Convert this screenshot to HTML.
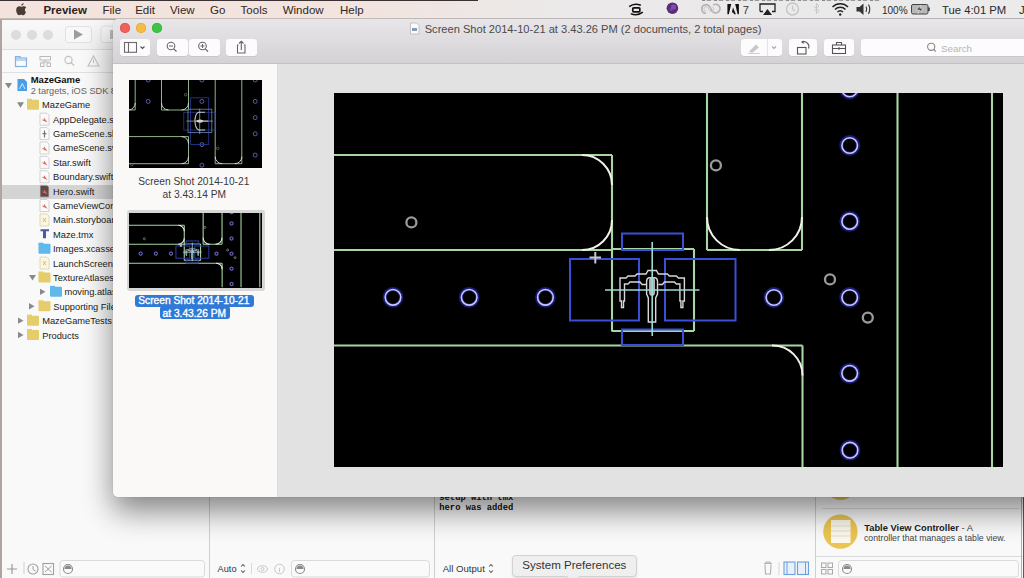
<!DOCTYPE html>
<html><head><meta charset="utf-8"><style>
*{margin:0;padding:0;box-sizing:border-box}
html,body{width:1024px;height:578px;overflow:hidden;background:#f5f5f5;font-family:'Liberation Sans', sans-serif}
.t{position:absolute;white-space:nowrap}
</style></head>
<body>
<div style="position:absolute;left:0.00px;top:0.00px;width:1024.00px;height:578.00px;background:#f9f9f9"></div>
<div style="position:absolute;left:0.00px;top:19.00px;width:1.60px;height:559.00px;background:#b0a4a0"></div>
<div style="position:absolute;left:0.00px;top:19.00px;width:1024.00px;height:1.00px;background:#b8aca8"></div>
<div style="position:absolute;left:1.60px;top:19.80px;width:1022.40px;height:29.20px;background:linear-gradient(#f8f8f8,#f2f2f2);border-radius:3px 0 0 0"></div>
<div style="position:absolute;left:2.00px;top:49.00px;width:1022.00px;height:1.00px;background:#dedede"></div>
<div style="position:absolute;left:11.3px;top:29.7px;width:10px;height:10px;border-radius:50%;background:#dcdcdc"></div>
<div style="position:absolute;left:27.3px;top:29.7px;width:10px;height:10px;border-radius:50%;background:#dcdcdc"></div>
<div style="position:absolute;left:43.3px;top:29.7px;width:10px;height:10px;border-radius:50%;background:#dcdcdc"></div>
<div style="position:absolute;left:65.00px;top:26.00px;width:27.00px;height:16.50px;border:1px solid #e2e2e2;border-radius:3px;background:#f8f8f8"></div>
<svg style="position:absolute;left:0;top:0px" width="120" height="80"><path d="M74,29.5 L83,34.5 L74,39.5 Z" fill="#9c9c9c"/><rect x="101" y="26" width="14" height="16.5" rx="3" fill="#f8f8f8" stroke="#e2e2e2"/><rect x="110" y="30" width="3" height="9" fill="#bdbdbd"/></svg>
<svg style="position:absolute;left:0;top:52px" width="113" height="20">
<rect x="15.5" y="6" width="11" height="8.5" fill="none" stroke="#86b2e2" stroke-width="1.2"/><path d="M15.5,6 L15.5,4.5 L20,4.5 L21,6" fill="none" stroke="#86b2e2" stroke-width="1.2"/><line x1="15.5" y1="8" x2="26.5" y2="8" stroke="#86b2e2" stroke-width="1"/>
<rect x="40" y="4.5" width="10.5" height="3.5" fill="none" stroke="#bcbcbc" stroke-width="1"/><rect x="40.5" y="11" width="3.5" height="3.5" fill="none" stroke="#bcbcbc"/><rect x="47" y="11" width="3.5" height="3.5" fill="none" stroke="#bcbcbc"/><path d="M45,8 V10 M42,11 V10 H49 V11" fill="none" stroke="#bcbcbc"/>
<circle cx="68.5" cy="8" r="3.6" fill="none" stroke="#c0c0c0" stroke-width="1.1"/><line x1="71" y1="10.5" x2="74" y2="13.5" stroke="#c0c0c0" stroke-width="1.2"/>
<path d="M93.5,4 L99,14 L88,14 Z" fill="none" stroke="#c4c4c4" stroke-width="1.1"/><line x1="93.5" y1="7.5" x2="93.5" y2="11" stroke="#c4c4c4"/>
</svg>
<div style="position:absolute;left:2.00px;top:72.00px;width:207.00px;height:1.00px;background:#e0e0e0"></div>
<div style="position:absolute;left:2.00px;top:184.50px;width:207.00px;height:14.00px;background:#d4d4d4"></div>
<div class="t" style="left:30.70px;top:74.70px;font-size:9.5px;line-height:9.5px;color:#111;font-weight:bold;font-family:'Liberation Sans', sans-serif;">MazeGame</div>
<div class="t" style="left:30.70px;top:86.50px;font-size:9.2px;line-height:9.2px;color:#666;font-weight:normal;font-family:'Liberation Sans', sans-serif;">2 targets, iOS SDK 8.1</div>
<div class="t" style="left:42.10px;top:101.30px;font-size:9.3px;line-height:9.3px;color:#222;font-weight:normal;font-family:'Liberation Sans', sans-serif;">MazeGame</div>
<div class="t" style="left:53.00px;top:115.69px;font-size:9.3px;line-height:9.3px;color:#222;font-weight:normal;font-family:'Liberation Sans', sans-serif;">AppDelegate.swift</div>
<div class="t" style="left:53.00px;top:130.08px;font-size:9.3px;line-height:9.3px;color:#222;font-weight:normal;font-family:'Liberation Sans', sans-serif;">GameScene.sks</div>
<div class="t" style="left:53.00px;top:144.47px;font-size:9.3px;line-height:9.3px;color:#222;font-weight:normal;font-family:'Liberation Sans', sans-serif;">GameScene.swift</div>
<div class="t" style="left:53.00px;top:158.86px;font-size:9.3px;line-height:9.3px;color:#222;font-weight:normal;font-family:'Liberation Sans', sans-serif;">Star.swift</div>
<div class="t" style="left:53.00px;top:173.25px;font-size:9.3px;line-height:9.3px;color:#222;font-weight:normal;font-family:'Liberation Sans', sans-serif;">Boundary.swift</div>
<div class="t" style="left:53.00px;top:187.64px;font-size:9.3px;line-height:9.3px;color:#222;font-weight:normal;font-family:'Liberation Sans', sans-serif;">Hero.swift</div>
<div class="t" style="left:53.00px;top:202.03px;font-size:9.3px;line-height:9.3px;color:#222;font-weight:normal;font-family:'Liberation Sans', sans-serif;">GameViewController.swift</div>
<div class="t" style="left:53.00px;top:216.42px;font-size:9.3px;line-height:9.3px;color:#222;font-weight:normal;font-family:'Liberation Sans', sans-serif;">Main.storyboard</div>
<div class="t" style="left:53.00px;top:230.81px;font-size:9.3px;line-height:9.3px;color:#222;font-weight:normal;font-family:'Liberation Sans', sans-serif;">Maze.tmx</div>
<div class="t" style="left:53.00px;top:245.20px;font-size:9.3px;line-height:9.3px;color:#222;font-weight:normal;font-family:'Liberation Sans', sans-serif;">Images.xcassets</div>
<div class="t" style="left:53.00px;top:259.59px;font-size:9.3px;line-height:9.3px;color:#222;font-weight:normal;font-family:'Liberation Sans', sans-serif;">LaunchScreen.xib</div>
<div class="t" style="left:53.00px;top:273.98px;font-size:9.3px;line-height:9.3px;color:#222;font-weight:normal;font-family:'Liberation Sans', sans-serif;">TextureAtlases</div>
<div class="t" style="left:64.40px;top:288.37px;font-size:9.3px;line-height:9.3px;color:#222;font-weight:normal;font-family:'Liberation Sans', sans-serif;">moving.atlas</div>
<div class="t" style="left:53.30px;top:302.76px;font-size:9.3px;line-height:9.3px;color:#222;font-weight:normal;font-family:'Liberation Sans', sans-serif;">Supporting Files</div>
<div class="t" style="left:42.20px;top:317.15px;font-size:9.3px;line-height:9.3px;color:#222;font-weight:normal;font-family:'Liberation Sans', sans-serif;">MazeGameTests</div>
<div class="t" style="left:42.20px;top:331.54px;font-size:9.3px;line-height:9.3px;color:#222;font-weight:normal;font-family:'Liberation Sans', sans-serif;">Products</div>
<svg style="position:absolute;left:0;top:0px" width="113" height="350">
<path d="M5,83 L12,83 L8.5,88.5 Z" fill="#8a8a8a"/>
<path d="M17.5,79 L24,79 L27,82 L27,91 L17.5,91 Z" fill="#4a9ee6"/><path d="M19.5,89 L22.3,83.5 L25,89" fill="none" stroke="#d8ecff" stroke-width="1"/>
<path d="M17,102.3 L24,102.3 L20.5,107.8 Z" fill="#8a8a8a"/>
<rect x="27" y="99.8" width="12" height="10" rx="1" fill="#e4cd6a"/><rect x="27" y="98.8" width="5" height="2" fill="#e4cd6a"/>
<path d="M40,113.19 L47,113.19 L49,115.19 L49,125.19 L40,125.19 Z" fill="#fbfbfb" stroke="#c8c8c8" stroke-width="0.8"/><path d="M42.5,119.69 L46,121.19 L44,118.19" fill="none" stroke="#e06a5a" stroke-width="1.1"/>
<path d="M40,127.57999999999998 L47,127.57999999999998 L49,129.57999999999998 L49,139.57999999999998 L40,139.57999999999998 Z" fill="#fbfbfb" stroke="#c8c8c8" stroke-width="0.8"/><path d="M44.5,130.57999999999998 V137.57999999999998 M42.5,133.57999999999998 H46.5" stroke="#777" stroke-width="1.2"/>
<path d="M40,141.97 L47,141.97 L49,143.97 L49,153.97 L40,153.97 Z" fill="#fbfbfb" stroke="#c8c8c8" stroke-width="0.8"/><path d="M42.5,148.47 L46,149.97 L44,146.97" fill="none" stroke="#e06a5a" stroke-width="1.1"/>
<path d="M40,156.36 L47,156.36 L49,158.36 L49,168.36 L40,168.36 Z" fill="#fbfbfb" stroke="#c8c8c8" stroke-width="0.8"/><path d="M42.5,162.86 L46,164.36 L44,161.36" fill="none" stroke="#e06a5a" stroke-width="1.1"/>
<path d="M40,170.75 L47,170.75 L49,172.75 L49,182.75 L40,182.75 Z" fill="#fbfbfb" stroke="#c8c8c8" stroke-width="0.8"/><path d="M42.5,177.25 L46,178.75 L44,175.75" fill="none" stroke="#e06a5a" stroke-width="1.1"/>
<path d="M40,185.14 L47,185.14 L49,187.14 L49,197.14 L40,197.14 Z" fill="#5a4a48" stroke="#c8c8c8" stroke-width="0.8"/><path d="M42.5,191.64 L46,193.14 L44,190.14" fill="none" stroke="#e06a5a" stroke-width="1.1"/>
<path d="M40,199.53 L47,199.53 L49,201.53 L49,211.53 L40,211.53 Z" fill="#fbfbfb" stroke="#c8c8c8" stroke-width="0.8"/><path d="M42.5,206.03 L46,207.53 L44,204.53" fill="none" stroke="#e06a5a" stroke-width="1.1"/>
<path d="M40,213.92000000000002 L47,213.92000000000002 L49,215.92000000000002 L49,225.92000000000002 L40,225.92000000000002 Z" fill="#fbf6e0" stroke="#d8d0b0" stroke-width="0.8"/><path d="M43,217.92000000000002 L46,221.92000000000002 M46,217.92000000000002 L43,221.92000000000002" stroke="#d0b860" stroke-width="0.9"/>
<path d="M40.5,229.31 H49 V231.31 H46 V238.31 H43 V231.31 H40.5 Z" fill="#4a5aa8"/>
<rect x="38.5" y="243.7" width="12" height="10" rx="1" fill="#5fb8ea"/><rect x="38.5" y="242.7" width="5" height="2" fill="#5fb8ea"/>
<path d="M40,257.09000000000003 L47,257.09000000000003 L49,259.09000000000003 L49,269.09000000000003 L40,269.09000000000003 Z" fill="#fbf6e0" stroke="#d8d0b0" stroke-width="0.8"/><path d="M43,261.09000000000003 L46,265.09000000000003 M46,261.09000000000003 L43,265.09000000000003" stroke="#d0b860" stroke-width="0.9"/>
<path d="M29,274.98 L36,274.98 L32.5,280.48 Z" fill="#8a8a8a"/>
<rect x="38.5" y="272.48" width="12" height="10" rx="1" fill="#e4cd6a"/><rect x="38.5" y="271.48" width="5" height="2" fill="#e4cd6a"/>
<path d="M40,288.67 L45.5,291.87 L40,295.07 Z" fill="#8a8a8a"/>
<rect x="50" y="286.87" width="12" height="10" rx="1" fill="#5fb8ea"/><rect x="50" y="285.87" width="5" height="2" fill="#5fb8ea"/>
<path d="M29,303.06 L34.5,306.26 L29,309.46 Z" fill="#8a8a8a"/>
<rect x="38.5" y="301.26" width="12" height="10" rx="1" fill="#e4cd6a"/><rect x="38.5" y="300.26" width="5" height="2" fill="#e4cd6a"/>
<path d="M18,317.45000000000005 L23.5,320.65000000000003 L18,323.85 Z" fill="#8a8a8a"/>
<rect x="27" y="315.65000000000003" width="12" height="10" rx="1" fill="#e4cd6a"/><rect x="27" y="314.65000000000003" width="5" height="2" fill="#e4cd6a"/>
<path d="M18,331.84000000000003 L23.5,335.04 L18,338.24 Z" fill="#8a8a8a"/>
<rect x="27" y="330.04" width="12" height="10" rx="1" fill="#e4cd6a"/><rect x="27" y="329.04" width="5" height="2" fill="#e4cd6a"/>
</svg>
<div style="position:absolute;left:208.50px;top:497.00px;width:1.00px;height:81.00px;background:#cfcfcf"></div>
<div style="position:absolute;left:434.00px;top:497.00px;width:1.00px;height:81.00px;background:#cfcfcf"></div>
<div style="position:absolute;left:815.00px;top:497.00px;width:1.00px;height:81.00px;background:#cfcfcf"></div>
<div class="t" style="left:439.30px;top:493.80px;font-size:8.8px;line-height:8.8px;color:#111;font-weight:bold;font-family:'Liberation Mono', monospace;">setup with tmx</div>
<div class="t" style="left:439.30px;top:503.60px;font-size:8.8px;line-height:8.8px;color:#111;font-weight:bold;font-family:'Liberation Mono', monospace;">hero was added</div>
<div class="t" style="left:217.60px;top:564.80px;font-size:9.2px;line-height:9.2px;color:#333;font-weight:normal;font-family:'Liberation Sans', sans-serif;">Auto</div>
<div class="t" style="left:442.70px;top:563.80px;font-size:9.6px;line-height:9.6px;color:#333;font-weight:normal;font-family:'Liberation Sans', sans-serif;">All Output</div>
<div style="position:absolute;left:822.00px;top:508.00px;width:198.00px;height:1.00px;background:#dcdcdc"></div>
<svg style="position:absolute;left:0;top:490px" width="1024" height="88">
<circle cx="840.4" cy="-7" r="17" fill="#e8c44a"/>
<circle cx="840.4" cy="41.6" r="17.2" fill="#eac552"/>
<rect x="831" y="30" width="19.5" height="23" fill="#fbf8ee"/>
<path d="M831,36 H850.5 M831,41 H850.5 M831,46 H850.5" stroke="#e6dcc0" stroke-width="1"/>
<path d="M12,74 V84 M7,79 H17" stroke="#9a9a9a" stroke-width="1.2"/>
<line x1="24" y1="72" x2="24" y2="84" stroke="#d0d0d0"/>
<circle cx="33" cy="79" r="5" fill="none" stroke="#a0a0a0" stroke-width="1.1"/><path d="M33,76 V79.5 L35.5,81" fill="none" stroke="#a0a0a0"/>
<rect x="43" y="73.5" width="10.5" height="11" fill="none" stroke="#a0a0a0" stroke-width="1.1"/><path d="M45,76 L51.5,82 M51.5,76 L45,82" stroke="#a0a0a0"/>
<rect x="60" y="70.5" width="144.5" height="16.5" rx="3" fill="#fafafa" stroke="#dadada"/>
<circle cx="68" cy="79" r="4.5" fill="none" stroke="#8a8a8a" stroke-width="1.1"/><path d="M64.5,79 A3.5,3.5 0 0 1 71.5,79 Z" fill="#8a8a8a"/>
<path d="M241.2,76.5 L243,74.5 L244.8,76.5 M241.2,80.5 L243,82.5 L244.8,80.5" fill="none" stroke="#555" stroke-width="1.1"/>
<line x1="251.5" y1="73" x2="251.5" y2="84" stroke="#d8d8d8"/>
<ellipse cx="262.5" cy="79" rx="5" ry="3.3" fill="none" stroke="#c8c8c8" stroke-width="1"/><circle cx="262.5" cy="79" r="1.5" fill="none" stroke="#c8c8c8"/>
<circle cx="279.5" cy="79" r="4.8" fill="none" stroke="#c8c8c8" stroke-width="1"/><line x1="279.5" y1="78" x2="279.5" y2="82" stroke="#c8c8c8"/>
<rect x="291.5" y="70.5" width="138" height="16.5" rx="3" fill="#fafafa" stroke="#dadada"/>
<circle cx="300" cy="79" r="4.5" fill="none" stroke="#8a8a8a" stroke-width="1.1"/><path d="M296.5,79 A3.5,3.5 0 0 1 303.5,79 Z" fill="#8a8a8a"/>
<path d="M489.2,76.5 L491,74.5 L492.8,76.5 M489.2,80.5 L491,82.5 L492.8,80.5" fill="none" stroke="#555" stroke-width="1.1"/>
<path d="M764,73.5 H772 M766,73.5 V72 H770 V73.5 M765,74.5 L765.5,84 H770.5 L771,74.5" fill="none" stroke="#b0b0b0" stroke-width="1.1"/>
<line x1="779" y1="72" x2="779" y2="85" stroke="#d8d8d8"/>
<rect x="784" y="72" width="11" height="12.5" fill="#e8f0fa" stroke="#6aa0dc" stroke-width="1.1"/><line x1="787" y1="72" x2="787" y2="84.5" stroke="#6aa0dc"/>
<rect x="797.5" y="72" width="11" height="12.5" fill="#e8f0fa" stroke="#6aa0dc" stroke-width="1.1"/><line x1="805.5" y1="72" x2="805.5" y2="84.5" stroke="#6aa0dc"/>
<line x1="816" y1="66.5" x2="1024" y2="66.5" stroke="#dadada"/>
<rect x="821.5" y="73" width="4.5" height="4.5" fill="none" stroke="#a8a8a8"/><rect x="828" y="73" width="4.5" height="4.5" fill="none" stroke="#a8a8a8"/><rect x="821.5" y="79.5" width="4.5" height="4.5" fill="none" stroke="#a8a8a8"/><rect x="828" y="79.5" width="4.5" height="4.5" fill="none" stroke="#a8a8a8"/>
<rect x="838.5" y="70.5" width="180" height="16.5" rx="3" fill="#fafafa" stroke="#dadada"/>
<circle cx="847" cy="79" r="4.5" fill="none" stroke="#8a8a8a" stroke-width="1.1"/><path d="M843.5,79 A3.5,3.5 0 0 1 850.5,79 Z" fill="#8a8a8a"/>
</svg>
<div class="t" style="left:864.20px;top:523.80px;font-size:9.36px;line-height:9.36px;color:#222;font-weight:bold;font-family:'Liberation Sans', sans-serif;">Table View Controller <span style="font-weight:normal;color:#444">- A</span></div>
<div class="t" style="left:864.00px;top:534.20px;font-size:8.73px;line-height:8.73px;color:#444;font-weight:normal;font-family:'Liberation Sans', sans-serif;">controller that manages a table view.</div>
<div style="position:absolute;left:1021.30px;top:497.00px;width:1.20px;height:81.00px;background:#b0b0b0"></div>
<div style="position:absolute;left:1022.50px;top:497.00px;width:1.50px;height:81.00px;background:#5a5a5a"></div>
<div style="position:absolute;left:113px;top:19px;width:940px;height:478px;border-radius:5px;overflow:hidden;box-shadow:0 14px 30px rgba(0,0,0,0.47),0 0 1px rgba(0,0,0,0.3);background:#e2e2e2">
<div style="position:absolute;left:-113px;top:-19px;width:1024px;height:578px">
<div style="position:absolute;left:113.00px;top:19.00px;width:940.00px;height:44.00px;background:linear-gradient(#e8e6e8,#d4d2d4)"></div>
<div style="position:absolute;left:113.00px;top:62.50px;width:940.00px;height:1.00px;background:#c2c2c2"></div>
<div style="position:absolute;left:119.5px;top:23px;width:10px;height:10px;border-radius:50%;background:#f2605a;box-shadow:inset 0 0 0 0.5px #d84c46"></div>
<div style="position:absolute;left:135.5px;top:23px;width:10px;height:10px;border-radius:50%;background:#f6bb42;box-shadow:inset 0 0 0 0.5px #d8a036"></div>
<div style="position:absolute;left:151.5px;top:23px;width:10px;height:10px;border-radius:50%;background:#3ec444;box-shadow:inset 0 0 0 0.5px #2ea83a"></div>
<div style="position:absolute;left:120.00px;top:39.00px;width:30.00px;height:17.00px;background:#fcfcfc;border-radius:3px;box-shadow:0 0.5px 0.5px rgba(0,0,0,0.12)"></div>
<div style="position:absolute;left:156.60px;top:39.00px;width:31.00px;height:17.00px;background:#fcfcfc;border-radius:3px;box-shadow:0 0.5px 0.5px rgba(0,0,0,0.12)"></div>
<div style="position:absolute;left:189.40px;top:39.00px;width:30.30px;height:17.00px;background:#fcfcfc;border-radius:3px;box-shadow:0 0.5px 0.5px rgba(0,0,0,0.12)"></div>
<div style="position:absolute;left:225.90px;top:39.00px;width:30.80px;height:17.00px;background:#fcfcfc;border-radius:3px;box-shadow:0 0.5px 0.5px rgba(0,0,0,0.12)"></div>
<div style="position:absolute;left:741.40px;top:39.00px;width:40.60px;height:17.00px;background:#fcfcfc;border-radius:3px;box-shadow:0 0.5px 0.5px rgba(0,0,0,0.12)"></div>
<div style="position:absolute;left:788.60px;top:39.00px;width:28.60px;height:17.00px;background:#fcfcfc;border-radius:3px;box-shadow:0 0.5px 0.5px rgba(0,0,0,0.12)"></div>
<div style="position:absolute;left:823.70px;top:39.00px;width:30.10px;height:17.00px;background:#fcfcfc;border-radius:3px;box-shadow:0 0.5px 0.5px rgba(0,0,0,0.12)"></div>
<div style="position:absolute;left:861.10px;top:39.00px;width:168.90px;height:17.00px;background:#fcfcfc;border-radius:3px;box-shadow:0 0.5px 0.5px rgba(0,0,0,0.12)"></div>
<svg style="position:absolute;left:0;top:0px" width="1024" height="64">
<rect x="124.5" y="42.5" width="12" height="9.8" fill="none" stroke="#6a6a6a" stroke-width="1.1"/><line x1="128.5" y1="42.5" x2="128.5" y2="52.3" stroke="#6a6a6a" stroke-width="1.1"/>
<path d="M140.5,46.5 L142.5,48.5 L144.5,46.5" fill="none" stroke="#555" stroke-width="1.1"/>
<circle cx="171" cy="46" r="3.8" fill="none" stroke="#666" stroke-width="1.1"/><line x1="169" y1="46" x2="173" y2="46" stroke="#666"/><line x1="173.8" y1="48.8" x2="176.5" y2="51.5" stroke="#666" stroke-width="1.2"/>
<circle cx="202.5" cy="46" r="3.8" fill="none" stroke="#666" stroke-width="1.1"/><line x1="200.5" y1="46" x2="204.5" y2="46" stroke="#666"/><line x1="202.5" y1="44" x2="202.5" y2="48" stroke="#666"/><line x1="205.3" y1="48.8" x2="208" y2="51.5" stroke="#666" stroke-width="1.2"/>
<path d="M238.5,45 H237.5 V53 H245 V45 H244 M241.3,50 V41.5 M239,43.5 L241.3,41.3 L243.6,43.5" fill="none" stroke="#666" stroke-width="1.1"/>
<path d="M749,51.5 L756,44.5 L759,47.5 L752,53 Z" fill="#c8c8c8"/><line x1="748" y1="53.5" x2="760" y2="53.5" stroke="#d0d0d0"/>
<line x1="767.4" y1="39" x2="767.4" y2="56" stroke="#e4e4e4"/>
<path d="M772,46.5 L774,48.5 L776,46.5" fill="none" stroke="#aaa" stroke-width="1.1"/>
<rect x="797.5" y="47.5" width="8.5" height="6.5" fill="none" stroke="#555" stroke-width="1.1"/><path d="M802,42 A5,5 0 0 1 808.5,48.5" fill="none" stroke="#555" stroke-width="1.1"/><path d="M801,42 L803.5,40.5 L803.5,44 Z" fill="#555"/>
<rect x="832.5" y="45" width="13" height="8.5" fill="none" stroke="#555" stroke-width="1.1"/><path d="M836.5,45 V42.5 H841.5 V45 M832.5,48.5 H845.5" fill="none" stroke="#555" stroke-width="1.1"/><rect x="838" y="47.5" width="2" height="2" fill="#555"/>
<circle cx="931.2" cy="46.8" r="3.6" fill="none" stroke="#888" stroke-width="1.1"/><line x1="933.8" y1="49.4" x2="935.8" y2="51.6" stroke="#888" stroke-width="1.2"/>
<path d="M410.5,23 H416.5 L419,25.5 V34 H410.5 Z" fill="#fafafa" stroke="#b8b8b8" stroke-width="0.8"/><rect x="412" y="28" width="5" height="3" fill="#8898b8"/>
</svg>
<div class="t" style="left:424.70px;top:23.60px;font-size:11.1px;line-height:11.1px;color:#4a4a4a;font-weight:normal;font-family:'Liberation Sans', sans-serif;">Screen Shot 2014-10-21 at 3.43.26 PM (2 documents, 2 total pages)</div>
<div class="t" style="left:941.00px;top:43.60px;font-size:9.8px;line-height:9.8px;color:#b4b4b4;font-weight:normal;font-family:'Liberation Sans', sans-serif;">Search</div>
<div style="position:absolute;left:113.00px;top:63.50px;width:164.30px;height:433.50px;background:#faf9f8"></div>
<div style="position:absolute;left:276.80px;top:63.50px;width:1.00px;height:433.50px;background:#dcdcdc"></div>
<div style="position:absolute;left:129.00px;top:80.00px;width:133.00px;height:88.00px;background:#000"></div>
<div style="position:absolute;left:126.50px;top:209.50px;width:138.50px;height:81.00px;background:#d6d6d6;border-radius:3px"></div>
<div style="position:absolute;left:129.00px;top:213.00px;width:133.00px;height:75.00px;background:#000"></div>
<div class="t" style="left:138.30px;top:177.20px;font-size:10.2px;line-height:10.2px;color:#3a3a3a;font-weight:normal;font-family:'Liberation Sans', sans-serif;">Screen Shot 2014-10-21</div>
<div class="t" style="left:162.60px;top:189.60px;font-size:10.2px;line-height:10.2px;color:#3a3a3a;font-weight:normal;font-family:'Liberation Sans', sans-serif;">at 3.43.14 PM</div>
<div style="position:absolute;left:135.40px;top:294.60px;width:119.10px;height:12.00px;background:#3079d6;border-radius:3px"></div>
<div style="position:absolute;left:160.30px;top:306.30px;width:69.50px;height:12.70px;background:#3079d6;border-radius:3px"></div>
<div class="t" style="left:138.30px;top:296.20px;font-size:10.2px;line-height:10.2px;color:#fff;font-weight:normal;font-family:'Liberation Sans', sans-serif;-webkit-text-stroke:0.35px #fff">Screen Shot 2014-10-21</div>
<div class="t" style="left:162.60px;top:308.60px;font-size:10.2px;line-height:10.2px;color:#fff;font-weight:normal;font-family:'Liberation Sans', sans-serif;-webkit-text-stroke:0.35px #fff">at 3.43.26 PM</div>
<div style="position:absolute;left:334.00px;top:93.00px;width:669.00px;height:374.00px;background:#000"></div>
<svg style="position:absolute;left:0;top:0px" width="1024" height="578"><defs><clipPath id="cm"><rect x="334" y="93" width="669" height="374"/></clipPath><g id="game"><line x1="334" y1="155" x2="612" y2="155" stroke="#a8d6a2" stroke-width="2.1"/>
<line x1="612" y1="155" x2="612" y2="331" stroke="#a8d6a2" stroke-width="2.1"/>
<line x1="334" y1="250" x2="612" y2="250" stroke="#a8d6a2" stroke-width="2.1"/>
<line x1="611.5" y1="249" x2="694" y2="249" stroke="#a8d6a2" stroke-width="2.1"/>
<line x1="694" y1="249" x2="694" y2="331" stroke="#a8d6a2" stroke-width="2.1"/>
<line x1="611.5" y1="331" x2="694" y2="331" stroke="#a8d6a2" stroke-width="2.1"/>
<line x1="707" y1="93" x2="707" y2="250" stroke="#a8d6a2" stroke-width="2.1"/>
<line x1="802" y1="93" x2="802" y2="250" stroke="#a8d6a2" stroke-width="2.1"/>
<line x1="707" y1="250" x2="802" y2="250" stroke="#a8d6a2" stroke-width="2.1"/>
<line x1="334" y1="345.5" x2="802.5" y2="345.5" stroke="#a8d6a2" stroke-width="2.1"/>
<line x1="802.5" y1="345.5" x2="802.5" y2="467" stroke="#a8d6a2" stroke-width="2.1"/>
<line x1="897.5" y1="93" x2="897.5" y2="467" stroke="#a8d6a2" stroke-width="2.1"/>
<line x1="992" y1="93" x2="992" y2="467" stroke="#a8d6a2" stroke-width="2.1"/>
<path d="M582,155 A30,30 0 0 1 612,185 M612,220 A30,30 0 0 1 582,250" fill="none" stroke="#f0f0e8" stroke-width="2.0"/>
<path d="M707,217 A33,33 0 0 0 740,250 M769,250 A33,33 0 0 0 802,217" fill="none" stroke="#f0f0e8" stroke-width="2.0"/>
<path d="M772,345.5 A30,30 0 0 1 802.5,375.5" fill="none" stroke="#f0f0e8" stroke-width="2.0"/>
<rect x="622" y="233.5" width="61" height="16.5" fill="none" stroke="#3a4fd6" stroke-width="2.0"/>
<rect x="622" y="329.5" width="61" height="15.5" fill="none" stroke="#3a4fd6" stroke-width="2.0"/>
<rect x="570" y="259" width="69" height="61.5" fill="none" stroke="#3a4fd6" stroke-width="2.0"/>
<rect x="665" y="259" width="70.5" height="61.5" fill="none" stroke="#3a4fd6" stroke-width="2.0"/>
<path d="M652,270.5 L648,270.5 L646,274 L637,274 L635,276 L628,276 L626,278 L620,278 L620,301 L621.5,301 L621.5,307.5 L623.5,307.5 L623.5,301 L624.5,301 L624.5,284 L628,284 L630,282 L640,282 L642,284.5 L646,284.5" fill="none" stroke="#d8d8d8" stroke-width="1.4"/>
<path d="M652,270.5 L648,270.5 L646,274 L637,274 L635,276 L628,276 L626,278 L620,278 L620,301 L621.5,301 L621.5,307.5 L623.5,307.5 L623.5,301 L624.5,301 L624.5,284 L628,284 L630,282 L640,282 L642,284.5 L646,284.5" fill="none" stroke="#d8d8d8" stroke-width="1.4" transform="translate(1304.4,0) scale(-1,1)"/>
<path d="M649.2,277.6 Q646.6,278.2 646.6,281.2 L646.6,294 L648.3,298 L648.3,322 L655.7,322 L655.7,298 L657.5,294 L657.5,281.2 Q657.5,278.2 654.9,277.6 Z" fill="none" stroke="#d8d8d8" stroke-width="1.4"/>
<rect x="649.6" y="277.5" width="4.9" height="18" rx="2.3" fill="#a8b4b4" stroke="#d0d0d0" stroke-width="0.8"/>
<line x1="652.2" y1="242" x2="652.2" y2="336" stroke="#9fd8d8" stroke-width="1.6"/>
<line x1="605" y1="290" x2="699.5" y2="290" stroke="#9fd8d8" stroke-width="1.6"/>
<path d="M595.3,252 L595.3,263.5 M589.5,257.6 L601,257.6" stroke="#c8c8c8" stroke-width="2.0"/>
<circle cx="849.7" cy="89" r="8.3" fill="none" stroke="#2a2ab8" stroke-width="4.2" opacity="0.65"/>
<circle cx="849.7" cy="89" r="7.8" fill="none" stroke="#c8c8f8" stroke-width="1.6"/>
<circle cx="849.7" cy="145.5" r="8.3" fill="none" stroke="#2a2ab8" stroke-width="4.2" opacity="0.65"/>
<circle cx="849.7" cy="145.5" r="7.8" fill="none" stroke="#c8c8f8" stroke-width="1.6"/>
<circle cx="849.7" cy="221.4" r="8.3" fill="none" stroke="#2a2ab8" stroke-width="4.2" opacity="0.65"/>
<circle cx="849.7" cy="221.4" r="7.8" fill="none" stroke="#c8c8f8" stroke-width="1.6"/>
<circle cx="849.7" cy="297.5" r="8.3" fill="none" stroke="#2a2ab8" stroke-width="4.2" opacity="0.65"/>
<circle cx="849.7" cy="297.5" r="7.8" fill="none" stroke="#c8c8f8" stroke-width="1.6"/>
<circle cx="849.7" cy="373.3" r="8.3" fill="none" stroke="#2a2ab8" stroke-width="4.2" opacity="0.65"/>
<circle cx="849.7" cy="373.3" r="7.8" fill="none" stroke="#c8c8f8" stroke-width="1.6"/>
<circle cx="850" cy="450.2" r="8.3" fill="none" stroke="#2a2ab8" stroke-width="4.2" opacity="0.65"/>
<circle cx="850" cy="450.2" r="7.8" fill="none" stroke="#c8c8f8" stroke-width="1.6"/>
<circle cx="393" cy="297.3" r="8.3" fill="none" stroke="#2a2ab8" stroke-width="4.2" opacity="0.65"/>
<circle cx="393" cy="297.3" r="7.8" fill="none" stroke="#c8c8f8" stroke-width="1.6"/>
<circle cx="469.2" cy="297.3" r="8.3" fill="none" stroke="#2a2ab8" stroke-width="4.2" opacity="0.65"/>
<circle cx="469.2" cy="297.3" r="7.8" fill="none" stroke="#c8c8f8" stroke-width="1.6"/>
<circle cx="545.4" cy="297.3" r="8.3" fill="none" stroke="#2a2ab8" stroke-width="4.2" opacity="0.65"/>
<circle cx="545.4" cy="297.3" r="7.8" fill="none" stroke="#c8c8f8" stroke-width="1.6"/>
<circle cx="773.9" cy="297.5" r="8.3" fill="none" stroke="#2a2ab8" stroke-width="4.2" opacity="0.65"/>
<circle cx="773.9" cy="297.5" r="7.8" fill="none" stroke="#c8c8f8" stroke-width="1.6"/>
<circle cx="411.4" cy="222.4" r="5" fill="none" stroke="#9a9a9a" stroke-width="2.3"/>
<circle cx="715.9" cy="165.4" r="5" fill="none" stroke="#9a9a9a" stroke-width="2.3"/>
<circle cx="830" cy="279.4" r="5" fill="none" stroke="#9a9a9a" stroke-width="2.3"/>
<circle cx="867.8" cy="317.6" r="5" fill="none" stroke="#9a9a9a" stroke-width="2.3"/></g><clipPath id="ct2"><rect x="129" y="213" width="133" height="75"/></clipPath></defs>
<g clip-path="url(#cm)"><use href="#game"/></g>
<g clip-path="url(#ct2)"><g transform="translate(62.599,194.511) scale(0.19880)"><line x1="334" y1="155" x2="612" y2="155" stroke="#a8d6a2" stroke-width="5.460000000000001"/>
<line x1="612" y1="155" x2="612" y2="331" stroke="#a8d6a2" stroke-width="5.460000000000001"/>
<line x1="334" y1="250" x2="612" y2="250" stroke="#a8d6a2" stroke-width="5.460000000000001"/>
<line x1="611.5" y1="249" x2="694" y2="249" stroke="#a8d6a2" stroke-width="5.460000000000001"/>
<line x1="694" y1="249" x2="694" y2="331" stroke="#a8d6a2" stroke-width="5.460000000000001"/>
<line x1="611.5" y1="331" x2="694" y2="331" stroke="#a8d6a2" stroke-width="5.460000000000001"/>
<line x1="707" y1="93" x2="707" y2="250" stroke="#a8d6a2" stroke-width="5.460000000000001"/>
<line x1="802" y1="93" x2="802" y2="250" stroke="#a8d6a2" stroke-width="5.460000000000001"/>
<line x1="707" y1="250" x2="802" y2="250" stroke="#a8d6a2" stroke-width="5.460000000000001"/>
<line x1="334" y1="345.5" x2="802.5" y2="345.5" stroke="#a8d6a2" stroke-width="5.460000000000001"/>
<line x1="802.5" y1="345.5" x2="802.5" y2="467" stroke="#a8d6a2" stroke-width="5.460000000000001"/>
<line x1="897.5" y1="93" x2="897.5" y2="467" stroke="#a8d6a2" stroke-width="5.460000000000001"/>
<line x1="992" y1="93" x2="992" y2="467" stroke="#a8d6a2" stroke-width="5.460000000000001"/>
<path d="M582,155 A30,30 0 0 1 612,185 M612,220 A30,30 0 0 1 582,250" fill="none" stroke="#f0f0e8" stroke-width="5.2"/>
<path d="M707,217 A33,33 0 0 0 740,250 M769,250 A33,33 0 0 0 802,217" fill="none" stroke="#f0f0e8" stroke-width="5.2"/>
<path d="M772,345.5 A30,30 0 0 1 802.5,375.5" fill="none" stroke="#f0f0e8" stroke-width="5.2"/>
<rect x="622" y="233.5" width="61" height="16.5" fill="none" stroke="#2c3a98" stroke-width="5.2"/>
<rect x="622" y="329.5" width="61" height="15.5" fill="none" stroke="#2c3a98" stroke-width="5.2"/>
<rect x="570" y="259" width="69" height="61.5" fill="none" stroke="#2c3a98" stroke-width="5.2"/>
<rect x="665" y="259" width="70.5" height="61.5" fill="none" stroke="#2c3a98" stroke-width="5.2"/>
<path d="M652,270.5 L648,270.5 L646,274 L637,274 L635,276 L628,276 L626,278 L620,278 L620,301 L621.5,301 L621.5,307.5 L623.5,307.5 L623.5,301 L624.5,301 L624.5,284 L628,284 L630,282 L640,282 L642,284.5 L646,284.5" fill="none" stroke="#d8d8d8" stroke-width="3.6399999999999997"/>
<path d="M652,270.5 L648,270.5 L646,274 L637,274 L635,276 L628,276 L626,278 L620,278 L620,301 L621.5,301 L621.5,307.5 L623.5,307.5 L623.5,301 L624.5,301 L624.5,284 L628,284 L630,282 L640,282 L642,284.5 L646,284.5" fill="none" stroke="#d8d8d8" stroke-width="3.6399999999999997" transform="translate(1304.4,0) scale(-1,1)"/>
<path d="M649.2,277.6 Q646.6,278.2 646.6,281.2 L646.6,294 L648.3,298 L648.3,322 L655.7,322 L655.7,298 L657.5,294 L657.5,281.2 Q657.5,278.2 654.9,277.6 Z" fill="none" stroke="#d8d8d8" stroke-width="3.6399999999999997"/>
<rect x="649.6" y="277.5" width="4.9" height="18" rx="2.3" fill="#a8b4b4" stroke="#d0d0d0" stroke-width="2.08"/>
<line x1="652.2" y1="242" x2="652.2" y2="336" stroke="#9fd8d8" stroke-width="4.16"/>
<line x1="605" y1="290" x2="699.5" y2="290" stroke="#9fd8d8" stroke-width="4.16"/>
<path d="M595.3,252 L595.3,263.5 M589.5,257.6 L601,257.6" stroke="#c8c8c8" stroke-width="5.2"/>
<circle cx="849.7" cy="89" r="8.3" fill="none" stroke="#2a2ab8" stroke-width="6.300000000000001" opacity="0.65"/>
<circle cx="849.7" cy="89" r="7.8" fill="none" stroke="#c8c8f8" stroke-width="2.4000000000000004"/>
<circle cx="849.7" cy="145.5" r="8.3" fill="none" stroke="#2a2ab8" stroke-width="6.300000000000001" opacity="0.65"/>
<circle cx="849.7" cy="145.5" r="7.8" fill="none" stroke="#c8c8f8" stroke-width="2.4000000000000004"/>
<circle cx="849.7" cy="221.4" r="8.3" fill="none" stroke="#2a2ab8" stroke-width="6.300000000000001" opacity="0.65"/>
<circle cx="849.7" cy="221.4" r="7.8" fill="none" stroke="#c8c8f8" stroke-width="2.4000000000000004"/>
<circle cx="849.7" cy="297.5" r="8.3" fill="none" stroke="#2a2ab8" stroke-width="6.300000000000001" opacity="0.65"/>
<circle cx="849.7" cy="297.5" r="7.8" fill="none" stroke="#c8c8f8" stroke-width="2.4000000000000004"/>
<circle cx="849.7" cy="373.3" r="8.3" fill="none" stroke="#2a2ab8" stroke-width="6.300000000000001" opacity="0.65"/>
<circle cx="849.7" cy="373.3" r="7.8" fill="none" stroke="#c8c8f8" stroke-width="2.4000000000000004"/>
<circle cx="850" cy="450.2" r="8.3" fill="none" stroke="#2a2ab8" stroke-width="6.300000000000001" opacity="0.65"/>
<circle cx="850" cy="450.2" r="7.8" fill="none" stroke="#c8c8f8" stroke-width="2.4000000000000004"/>
<circle cx="393" cy="297.3" r="8.3" fill="none" stroke="#2a2ab8" stroke-width="6.300000000000001" opacity="0.65"/>
<circle cx="393" cy="297.3" r="7.8" fill="none" stroke="#c8c8f8" stroke-width="2.4000000000000004"/>
<circle cx="469.2" cy="297.3" r="8.3" fill="none" stroke="#2a2ab8" stroke-width="6.300000000000001" opacity="0.65"/>
<circle cx="469.2" cy="297.3" r="7.8" fill="none" stroke="#c8c8f8" stroke-width="2.4000000000000004"/>
<circle cx="545.4" cy="297.3" r="8.3" fill="none" stroke="#2a2ab8" stroke-width="6.300000000000001" opacity="0.65"/>
<circle cx="545.4" cy="297.3" r="7.8" fill="none" stroke="#c8c8f8" stroke-width="2.4000000000000004"/>
<circle cx="773.9" cy="297.5" r="8.3" fill="none" stroke="#2a2ab8" stroke-width="6.300000000000001" opacity="0.65"/>
<circle cx="773.9" cy="297.5" r="7.8" fill="none" stroke="#c8c8f8" stroke-width="2.4000000000000004"/>
<circle cx="411.4" cy="222.4" r="5" fill="none" stroke="#9a9a9a" stroke-width="3.4499999999999997"/>
<circle cx="715.9" cy="165.4" r="5" fill="none" stroke="#9a9a9a" stroke-width="3.4499999999999997"/>
<circle cx="830" cy="279.4" r="5" fill="none" stroke="#9a9a9a" stroke-width="3.4499999999999997"/>
<circle cx="867.8" cy="317.6" r="5" fill="none" stroke="#9a9a9a" stroke-width="3.4499999999999997"/></g></g>
<defs><clipPath id="ct1"><rect x="129" y="80" width="133" height="88"/></clipPath></defs><g clip-path="url(#ct1)"><path d="M129,110 H135.2 V80" fill="none" stroke="#a0c898" stroke-width="0.9"/><path d="M161.5,80 V110 H188.5 V80" fill="none" stroke="#a0c898" stroke-width="0.9"/><path d="M215.2,80 V163.7 H241.8 V80" fill="none" stroke="#a0c898" stroke-width="0.9"/><path d="M129,136.6 H188.5 V163.7 H129" fill="none" stroke="#a0c898" stroke-width="0.9"/><path d="M135.2,103 A7,7 0 0 1 129,110" fill="none" stroke="#e0e0d8" stroke-width="0.9"/><path d="M161.5,103 A7,7 0 0 0 168.5,110 M181.5,110 A7,7 0 0 0 188.5,103" fill="none" stroke="#e0e0d8" stroke-width="0.9"/><path d="M215.2,156.7 A7,7 0 0 0 222.2,163.7 M234.8,163.7 A7,7 0 0 0 241.8,156.7" fill="none" stroke="#e0e0d8" stroke-width="0.9"/><path d="M181.5,136.6 A7,7 0 0 1 188.5,143.6 M188.5,156.7 A7,7 0 0 1 181.5,163.7" fill="none" stroke="#e0e0d8" stroke-width="0.9"/><circle cx="148.2" cy="101.4" r="2" fill="none" stroke="#7070d0" stroke-width="0.8"/><circle cx="148.2" cy="80" r="2" fill="none" stroke="#7070d0" stroke-width="0.8"/><circle cx="201.9" cy="101.4" r="2" fill="none" stroke="#7070d0" stroke-width="0.8"/><circle cx="201.9" cy="80" r="2" fill="none" stroke="#7070d0" stroke-width="0.8"/><circle cx="201.9" cy="144.6" r="2" fill="none" stroke="#7070d0" stroke-width="0.8"/><circle cx="201.9" cy="165.2" r="2" fill="none" stroke="#7070d0" stroke-width="0.8"/><circle cx="255.2" cy="80" r="2" fill="none" stroke="#7070d0" stroke-width="0.8"/><circle cx="255.2" cy="101.4" r="2" fill="none" stroke="#7070d0" stroke-width="0.8"/><circle cx="255.2" cy="117.6" r="2" fill="none" stroke="#7070d0" stroke-width="0.8"/><circle cx="255.2" cy="133.8" r="2" fill="none" stroke="#7070d0" stroke-width="0.8"/><circle cx="255.2" cy="155.1" r="2" fill="none" stroke="#7070d0" stroke-width="0.8"/><circle cx="185.7" cy="94.7" r="1.3" fill="none" stroke="#888" stroke-width="0.6"/><circle cx="217.7" cy="148.4" r="1.3" fill="none" stroke="#888" stroke-width="0.6"/><circle cx="131.8" cy="164.6" r="1.3" fill="none" stroke="#888" stroke-width="0.6"/><rect x="190.6" y="97.8" width="18.1" height="46.7" fill="none" stroke="#26348a" stroke-width="0.9"/><rect x="183.8" y="112.3" width="31.2" height="17.7" fill="none" stroke="#2a3a8e" stroke-width="0.8"/><rect x="188" y="109.2" width="23.8" height="23.3" fill="none" stroke="#6484b0" stroke-width="0.8"/><path d="M186.4,121.1 H212.9 M199.7,108.7 V134.1" stroke="#a8b8b8" stroke-width="0.7"/><path d="M205,112.3 H198.5 Q195,114 195,121 Q195,128 198.5,130 H205" fill="none" stroke="#c8c8c8" stroke-width="1.1"/><ellipse cx="200" cy="121.1" rx="3.2" ry="1.6" fill="#d8d8d8"/><path d="M196,121.1 H208" stroke="#c8c8c8" stroke-width="1"/></g>
</svg>
</div></div>
<div style="position:absolute;left:511.80px;top:554.50px;width:125.20px;height:22.30px;background:#efefef;border:1px solid #d2d2d2;border-radius:4px;box-shadow:0 1px 2px rgba(0,0,0,0.1)"></div>
<svg style="position:absolute;left:0;top:560px" width="1024" height="18"><path d="M566.5,16.3 L573,22.5 L579.5,16.3" fill="#efefef" stroke="#d2d2d2" stroke-width="1"/><rect x="567.5" y="15.5" width="11" height="1.3" fill="#efefef"/></svg>
<div class="t" style="left:522.30px;top:560.00px;font-size:11.57px;line-height:11.57px;color:#333;font-weight:normal;font-family:'Liberation Sans', sans-serif;">System Preferences</div>
<div style="position:absolute;left:0.00px;top:0.00px;width:1024.00px;height:19.00px;background:linear-gradient(to right,#f4e3dc 0%,#f2e4df 35%,#ebe9e9 55%,#ebebeb 100%)"></div>
<div style="position:absolute;left:0.00px;top:0.00px;width:478.00px;height:1.20px;background:#3a3232"></div>
<div style="position:absolute;left:702.00px;top:0.00px;width:178.00px;height:1.00px;background:repeating-linear-gradient(to right,#8a8a8a 0 3px,#d8d8d8 3px 5px,#999 5px 9px,#e0e0e0 9px 12px)"></div>
<div style="position:absolute;left:0.00px;top:17.80px;width:1024.00px;height:1.20px;background:linear-gradient(to right,#c9bdb8,#bdb8b6 50%,#b2b2b2)"></div>
<svg style="position:absolute;left:0;top:0px" width="1024" height="19"><path d="M21.2,5.6 C22.5,5.6 23.6,4.6 23.8,3.2 C22.4,3.3 21.2,4.3 21.2,5.6 Z M24.9,9.9 C24.9,8.3 26.1,7.6 26.2,7.5 C25.4,6.4 24.2,6.3 23.8,6.3 C22.9,6.2 22,6.8 21.5,6.8 C21,6.8 20.3,6.3 19.5,6.3 C18.3,6.3 16.2,7.2 16.2,10.3 C16.2,12.6 17.7,15.2 18.9,15.2 C19.7,15.2 20.2,14.7 21.1,14.7 C22,14.7 22.4,15.2 23.3,15.2 C24.4,15.2 25.5,13.2 26,11.9 C25.9,11.9 24.9,11.4 24.9,9.9 Z" fill="#4a3c36"/></svg>
<div class="t" style="left:43.40px;top:4.70px;font-size:11.5px;line-height:11.5px;color:#2a2220;font-weight:bold;font-family:'Liberation Sans', sans-serif;">Preview</div>
<div class="t" style="left:102.50px;top:4.70px;font-size:11.5px;line-height:11.5px;color:#2e2826;font-weight:normal;font-family:'Liberation Sans', sans-serif;">File</div>
<div class="t" style="left:135.20px;top:4.70px;font-size:11.5px;line-height:11.5px;color:#2e2826;font-weight:normal;font-family:'Liberation Sans', sans-serif;">Edit</div>
<div class="t" style="left:169.90px;top:4.70px;font-size:11.5px;line-height:11.5px;color:#2e2826;font-weight:normal;font-family:'Liberation Sans', sans-serif;">View</div>
<div class="t" style="left:210.00px;top:4.70px;font-size:11.5px;line-height:11.5px;color:#2e2826;font-weight:normal;font-family:'Liberation Sans', sans-serif;">Go</div>
<div class="t" style="left:240.60px;top:4.70px;font-size:11.5px;line-height:11.5px;color:#2e2826;font-weight:normal;font-family:'Liberation Sans', sans-serif;">Tools</div>
<div class="t" style="left:282.70px;top:4.70px;font-size:11.5px;line-height:11.5px;color:#2e2826;font-weight:normal;font-family:'Liberation Sans', sans-serif;">Window</div>
<div class="t" style="left:340.00px;top:4.70px;font-size:11.5px;line-height:11.5px;color:#2e2826;font-weight:normal;font-family:'Liberation Sans', sans-serif;">Help</div>
<svg style="position:absolute;left:0;top:0px" width="1024" height="19">
<rect x="632.8" y="7.8" width="7" height="4" rx="0.8" fill="none" stroke="#111" stroke-width="1.7"/><path d="M629.2,6.6 Q634,2.6 640.8,5.2 M630.8,13.6 Q637,16.6 642.8,12.2" fill="none" stroke="#111" stroke-width="1.5"/>
<circle cx="672.4" cy="8.2" r="5.8" fill="#5a2c7c"/><circle cx="673.5" cy="7" r="2.6" fill="#9a70c0" opacity="0.55"/><circle cx="671" cy="9.5" r="1.6" fill="#8a5ab0" opacity="0.5"/>
<path d="M706,13.3 A4.3,4.3 0 1 1 710,7.2 L712,10.8 A4.3,4.3 0 1 0 713.3,5" fill="none" stroke="#b4b4b4" stroke-width="1.6"/><path d="M706.2,11.2 A2.3,2.3 0 1 1 708.3,8 L710,11 A2.3,2.3 0 1 0 712.5,7" fill="none" stroke="#c4c4c4" stroke-width="1"/>
<path d="M727.4,4.1 L731.2,4.1 L728.8,14.3 L727.4,14.3 Z M735.2,4.1 L738.9,4.1 L738.9,14.3 L737.6,14.3 Z M733,7.6 L735.9,14.3 L734,14.3 L733.3,12.4 L731.8,12.4 Z" fill="#111"/>
<path d="M760,11.5 V4 H775 V11.5 H772 M763,11.5 H760" fill="none" stroke="#222" stroke-width="1.3"/><path d="M767.5,9 L772,15 L763,15 Z" fill="#222"/>
<circle cx="792.5" cy="9" r="6" fill="none" stroke="#c4c4c4" stroke-width="1.3"/><path d="M792.5,5.5 V9 L795,11" fill="none" stroke="#c4c4c4" stroke-width="1.1"/>
<path d="M814,6 L819,11 L816.5,13.5 V3.5 L819,6 L814,11" fill="none" stroke="#c8c8c8" stroke-width="1"/>
<path d="M832.5,7 A11,11 0 0 1 848,7 M835,9.5 A7.5,7.5 0 0 1 845.5,9.5 M837.5,12 A4,4 0 0 1 843,12" fill="none" stroke="#222" stroke-width="1.5"/><circle cx="840.2" cy="14.5" r="1.2" fill="#222"/>
<path d="M856.5,7 H859.5 L863.5,3.5 V15 L859.5,11.5 H856.5 Z" fill="#333"/><path d="M866,6.5 Q867.5,9.25 866,12 M868.5,4.5 Q871,9.25 868.5,14" fill="none" stroke="#333" stroke-width="1.1"/>
<rect x="911.5" y="4.5" width="16.5" height="9.5" rx="1.5" fill="#b8b8b8" stroke="#444" stroke-width="1"/><rect x="928" y="7.5" width="1.8" height="3.5" fill="#444"/><path d="M921,5 L916.5,10 H919.8 L918,13.5 L923,8.3 H919.8 Z" fill="#333" stroke="#eee" stroke-width="0.6"/>
</svg>
<div class="t" style="left:882.00px;top:5.60px;font-size:10.0px;line-height:10.0px;color:#2a2a2a;font-weight:normal;font-family:'Liberation Sans', sans-serif;">100%</div>
<div class="t" style="left:742.80px;top:5.30px;font-size:11.2px;line-height:11.2px;color:#333;font-weight:normal;font-family:'Liberation Sans', sans-serif;">7</div>
<div class="t" style="left:942.00px;top:4.70px;font-size:11.3px;line-height:11.3px;color:#2a2a2a;font-weight:normal;font-family:'Liberation Sans', sans-serif;">Tue 4:01 PM</div>
<div class="t" style="left:1019.00px;top:4.70px;font-size:11.5px;line-height:11.5px;color:#2a2a2a;font-weight:normal;font-family:'Liberation Sans', sans-serif;">J</div>
</body></html>
